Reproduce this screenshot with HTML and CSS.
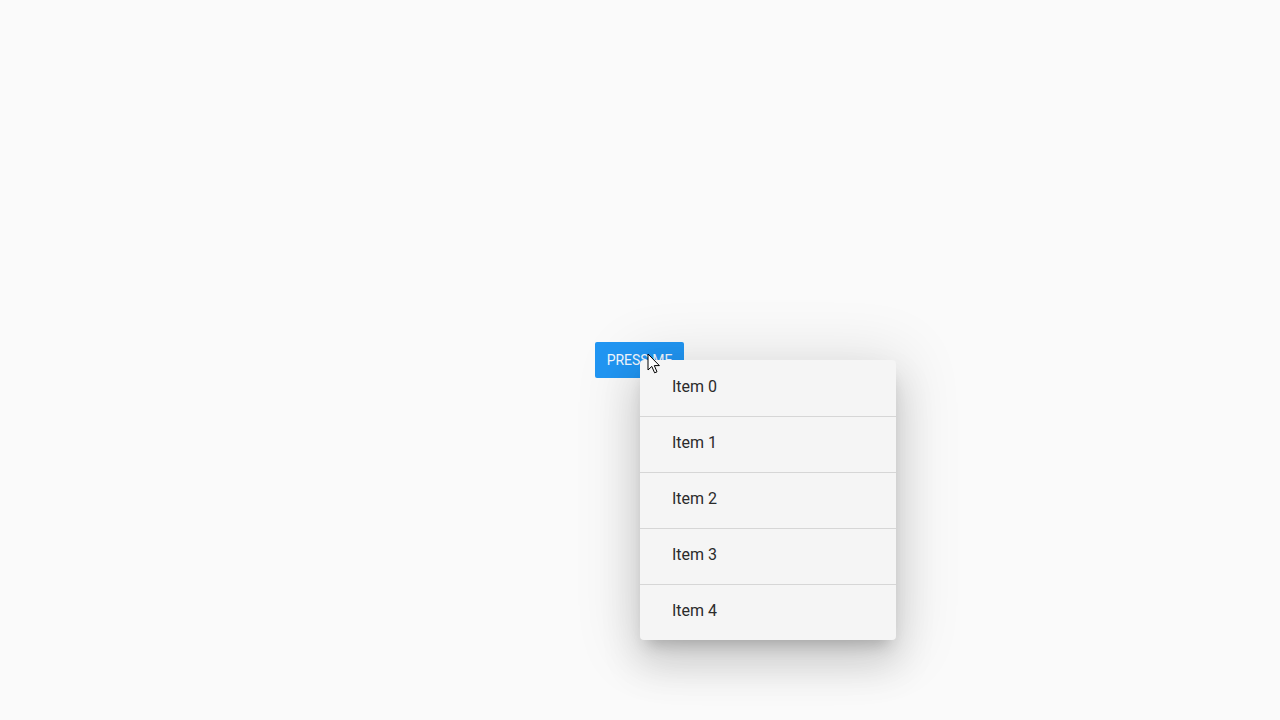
FILE: index.html
```html
<!DOCTYPE html>
<html lang="en">

<head>
    <meta charset="UTF-8">
    <meta name="viewport" content="width=device-width, initial-scale=1.0">
    <title>Menu</title>
    <link rel="stylesheet" href="styles.css">
</head>

<body>
    <div class="anchor">
        <button class="press">Press me</button>
        <ul class="menu">
            <li class="menu-item">Item 0</li>
            <li class="menu-item">Item 1</li>
            <li class="menu-item">Item 2</li>
            <li class="menu-item">Item 3</li>
            <li class="menu-item">Item 4</li>
        </ul>
        <svg class="cursor" width="14" height="22" viewBox="0 0 14 22">
            <path d="M1 1 L1 17 L4.8 13.4 L7.6 19.8 L10 18.8 L7.3 12.6 L12.4 12.6 Z" fill="#fff" stroke="#000" stroke-width="1" stroke-linejoin="round"/>
        </svg>
    </div>
</body>

</html>
```

FILE: styles.css
```css
html, body {
    margin: 0;
    height: 100%;
}

body {
    display: flex;
    justify-content: center;
    align-items: center;
    background-color: #fafafa;
    font-family: Roboto, "Liberation Sans", sans-serif;
}

.anchor {
    position: relative;
    margin-right: 1px;
}

.press {
    display: block;
    width: 89px;
    height: 36px;
    padding: 0;
    border: none;
    border-radius: 2px;
    background: #2196f3;
    color: #f4f9ff;
    font-family: inherit;
    font-size: 14px;
    text-transform: uppercase;
    cursor: pointer;
}

.menu {
    position: absolute;
    left: 45px;
    top: 18px;
    width: 256px;
    margin: 0;
    padding: 0;
    list-style: none;
    background: #f5f5f5;
    border-radius: 4px;
    box-shadow: 0 11px 15px -7px rgba(0, 0, 0, 0.2), 0 24px 38px 3px rgba(0, 0, 0, 0.12), 0 4px 60px 10px rgba(0, 0, 0, 0.1);
    overflow: hidden;
}

.menu-item {
    height: 56px;
    line-height: 54px;
    padding-left: 32px;
    font-size: 16px;
    color: #2b2b2b;
    box-sizing: border-box;
}

.menu-item + .menu-item {
    border-top: 1px solid #d6d6d6;
    line-height: 52px;
}

.cursor {
    position: absolute;
    left: 52px;
    top: 11px;
}
```
